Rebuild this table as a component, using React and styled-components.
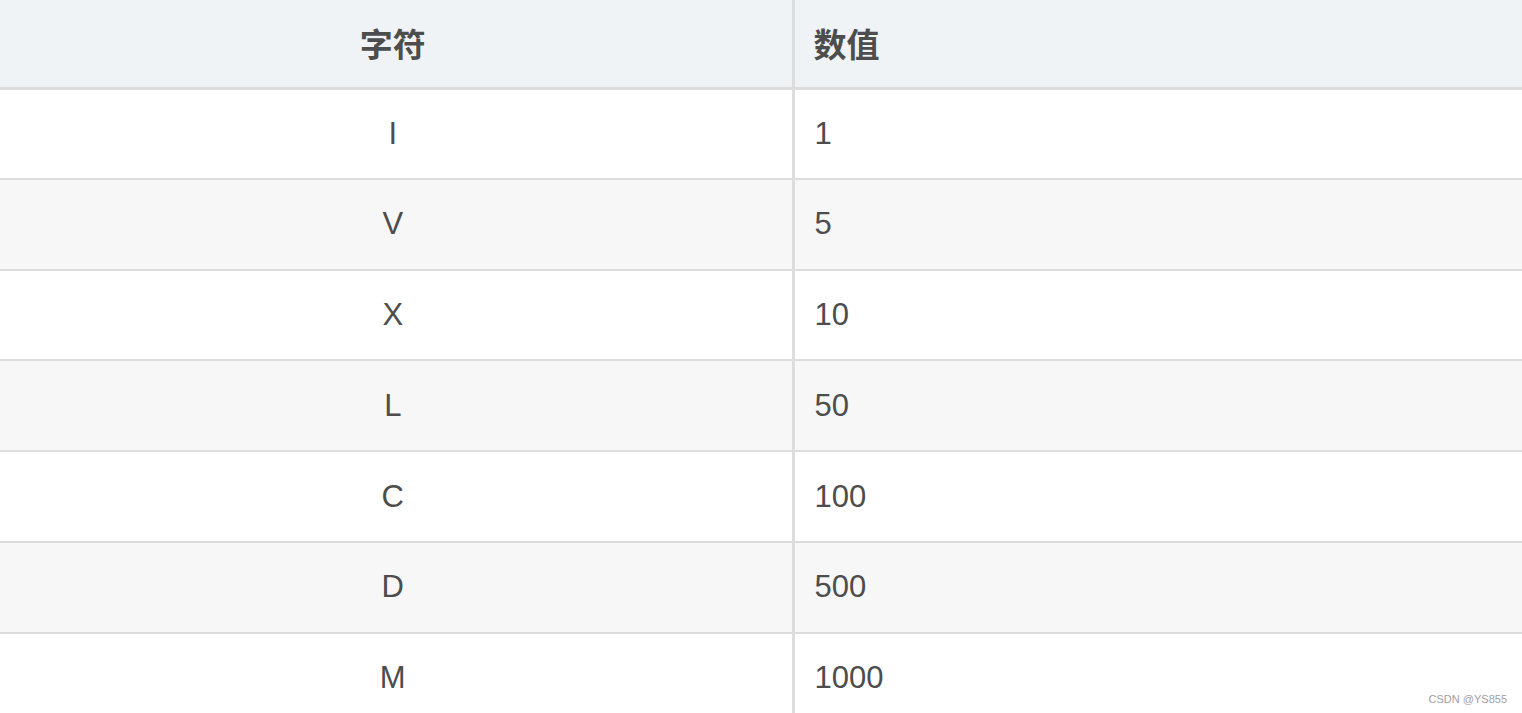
import React from "react";
import styled, { createGlobalStyle } from "styled-components";

const Global = createGlobalStyle`
  html, body { margin: 0; padding: 0; background: #ffffff; overflow: hidden; }
  body { font-family: "Liberation Sans", Arial, "Noto Sans CJK SC", sans-serif; }
`;

const Page = styled.div`
  position: relative;
  width: 1522px;
  height: 713px;
  overflow: hidden;
  background: #fff;
`;

const Table = styled.table`
  width: 1522px;
  border-collapse: collapse;
  table-layout: fixed;
  color: #4d4d4d;
`;

const HeadCell = styled.th`
  height: 88px;
  padding: ${(p) => (p.$divider ? "0 26px 0 20px" : "0 20px 0 19px")};
  box-sizing: border-box;
  background: #eff3f5;
  font-family: "Noto Sans CJK SC", "Liberation Sans", sans-serif;
  font-weight: 700;
  font-size: 33px;
  color: #4d4d4d;
  text-align: ${(p) => p.$align};
  border-bottom: 3px solid #dddddd;
  border-right: ${(p) => (p.$divider ? "3px solid #dddddd" : "none")};
  vertical-align: middle;
`;

const Row = styled.tr`
  background: ${(p) => (p.$alt ? "#f7f7f7" : "#ffffff")};
`;

const Cell = styled.td`
  height: 90.8px;
  padding: ${(p) => (p.$divider ? "0 26px 0 20px" : "0 20px")};
  box-sizing: border-box;
  font-size: 31px;
  text-align: ${(p) => p.$align};
  border-bottom: 2px solid #dddddd;
  border-right: ${(p) => (p.$divider ? "3px solid #dddddd" : "none")};
  vertical-align: middle;
`;

const Watermark = styled.div`
  position: absolute;
  right: 15px;
  bottom: 8px;
  font-family: "Liberation Sans", Arial, sans-serif;
  font-size: 11px;
  color: #a0a0a0;
`;

const rows = [
  ["I", "1"],
  ["V", "5"],
  ["X", "10"],
  ["L", "50"],
  ["C", "100"],
  ["D", "500"],
  ["M", "1000"],
];

export default function App() {
  return (
    <Page>
      <Global />
      <Table>
        <colgroup>
          <col style={{ width: "793px" }} />
          <col />
        </colgroup>
        <thead>
          <tr>
            <HeadCell $align="center" $divider>字符</HeadCell>
            <HeadCell $align="left">数值</HeadCell>
          </tr>
        </thead>
        <tbody>
          {rows.map(([sym, val], i) => (
            <Row key={sym} $alt={i % 2 === 1}>
              <Cell $align="center" $divider>{sym}</Cell>
              <Cell $align="left">{val}</Cell>
            </Row>
          ))}
        </tbody>
      </Table>
      <Watermark>CSDN @YS855</Watermark>
    </Page>
  );
}
